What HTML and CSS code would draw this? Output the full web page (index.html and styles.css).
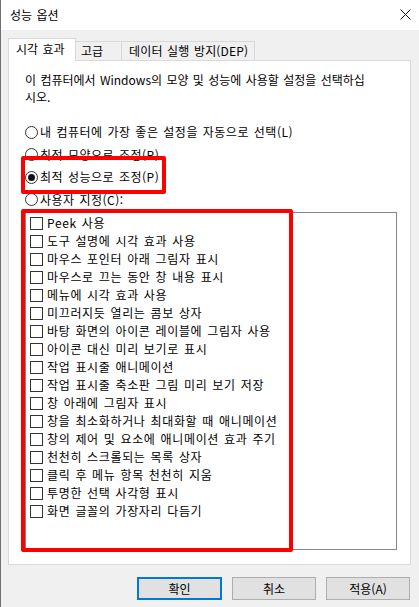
FILE: index.html
```html
<!DOCTYPE html>
<html lang="ko">
<head>
<meta charset="utf-8">
<title>성능 옵션</title>
<link rel="stylesheet" href="styles.css">
</head>
<body>
<div class="window">
  <div class="titlebar">
    <span class="title">성능 옵션</span>
    <svg class="close" width="11" height="11" viewBox="0 0 11 11"><path d="M0.5 0.5 L10.5 10.5 M10.5 0.5 L0.5 10.5" stroke="#111" stroke-width="1" fill="none"/></svg>
  </div>
  <div class="content">
    <div class="tabs">
      <div class="tab active">시각 효과</div>
      <div class="tab tab-adv">고급</div>
      <div class="tab tab-dep">데이터 실행 방지(DEP)</div>
    </div>
    <div class="panel">
      <p class="desc">이 컴퓨터에서 Windows의 모양 및 성능에 사용할 설정을 선택하십<br>시오.</p>
      <div class="radios">
        <div class="radio-row"><span class="radio"></span><span>내 컴퓨터에 가장 좋은 설정을 자동으로 선택(L)</span></div>
        <div class="radio-row"><span class="radio"></span><span>최적 모양으로 조정(P)</span></div>
        <div class="radio-row"><span class="radio checked"></span><span>최적 성능으로 조정(P)</span></div>
        <div class="radio-row"><span class="radio"></span><span>사용자 지정(C):</span></div>
      </div>
      <div class="listbox">
        <div class="item"><span class="check"></span><span>Peek 사용</span></div>
        <div class="item"><span class="check"></span><span>도구 설명에 시각 효과 사용</span></div>
        <div class="item"><span class="check"></span><span>마우스 포인터 아래 그림자 표시</span></div>
        <div class="item"><span class="check"></span><span>마우스로 끄는 동안 창 내용 표시</span></div>
        <div class="item"><span class="check"></span><span>메뉴에 시각 효과 사용</span></div>
        <div class="item"><span class="check"></span><span>미끄러지듯 열리는 콤보 상자</span></div>
        <div class="item"><span class="check"></span><span>바탕 화면의 아이콘 레이블에 그림자 사용</span></div>
        <div class="item"><span class="check"></span><span>아이콘 대신 미리 보기로 표시</span></div>
        <div class="item"><span class="check"></span><span>작업 표시줄 애니메이션</span></div>
        <div class="item"><span class="check"></span><span>작업 표시줄 축소판 그림 미리 보기 저장</span></div>
        <div class="item"><span class="check"></span><span>창 아래에 그림자 표시</span></div>
        <div class="item"><span class="check"></span><span>창을 최소화하거나 최대화할 때 애니메이션</span></div>
        <div class="item"><span class="check"></span><span>창의 제어 및 요소에 애니메이션 효과 주기</span></div>
        <div class="item"><span class="check"></span><span>천천히 스크롤되는 목록 상자</span></div>
        <div class="item"><span class="check"></span><span>클릭 후 메뉴 항목 천천히 지움</span></div>
        <div class="item"><span class="check"></span><span>투명한 선택 사각형 표시</span></div>
        <div class="item"><span class="check"></span><span>화면 글꼴의 가장자리 다듬기</span></div>
      </div>
    </div>
    <div class="buttons">
      <button class="btn default">확인</button>
      <button class="btn">취소</button>
      <button class="btn">적용(A)</button>
    </div>
  </div>
  <div class="mark mark-radio"></div>
  <div class="mark mark-list"></div>
</div>
</body>
</html>
```

FILE: styles.css
```css
* { box-sizing: border-box; }
html, body {
  margin: 0;
  padding: 0;
  width: 419px;
  height: 607px;
  overflow: hidden;
  background: #f0f0f0;
}
body {
  font-family: "Noto Sans CJK KR", "Noto Sans", sans-serif;
  font-size: 12px;
  color: #000;
  word-spacing: 1px;
}
.window {
  position: relative;
  width: 419px;
  height: 607px;
  border-left: 1px solid #707070;
  background: #f0f0f0;
}
.titlebar {
  height: 30px;
  background: #fff;
  display: flex;
  align-items: center;
  justify-content: space-between;
  padding-left: 9px;
  padding-right: 8px;
}
.title {
  font-size: 12px;
  line-height: 16px;
  margin-top: -1px;
}
.close {
  display: block;
  margin-top: -1px;
}
.content {
  padding: 0 8px 0 7px;
}
.tabs {
  display: flex;
  align-items: flex-end;
  height: 22px;
  margin-top: 8px;
  position: relative;
  z-index: 2;
}
.tab {
  height: 19px;
  line-height: 17px;
  border: 1px solid #d9d9d9;
  border-bottom: none;
  background: #f0f0f0;
  padding: 0 4px;
  white-space: nowrap;
}
.tab.active {
  height: 23px;
  line-height: 20px;
  margin-bottom: -1px;
  background: #fff;
  padding-left: 7px;
  width: 68px;
  position: relative;
  z-index: 2;
}
.tab-adv {
  width: 47px;
  margin-left: -1px;
  padding-left: 5px;
}
.tab-dep {
  width: 134px;
  margin-left: -1px;
  padding-left: 7px;
  letter-spacing: 0.15px;
}
.panel {
  background: #fff;
  border: 1px solid #d9d9d9;
  height: 505px;
  padding: 10px 0 0 16px;
  position: relative;
  z-index: 1;
}
.desc {
  margin: 0;
  line-height: 17px;
}
.radios {
  margin-top: 16px;
  letter-spacing: 0.5px;
}
.radio-row {
  height: 22.5px;
  display: flex;
  align-items: center;
  gap: 2px;
  line-height: 16px;
}
.radio {
  width: 13px;
  height: 13px;
  border: 1px solid #333;
  border-radius: 50%;
  background: #fff;
  display: flex;
  align-items: center;
  justify-content: center;
  flex: none;
}
.radio.checked::after {
  content: "";
  width: 7px;
  height: 7px;
  border-radius: 50%;
  background: #111;
}
.listbox {
  margin-top: 1px;
  width: 372px;
  height: 338px;
  border: 1px solid #828790;
  background: #fff;
  padding: 1px 0 0 4px;
  letter-spacing: 0.65px;
}
.item {
  height: 18px;
  display: flex;
  align-items: center;
  gap: 4px;
  line-height: 16px;
  white-space: nowrap;
}
.check {
  width: 13px;
  height: 13px;
  border: 1px solid #333;
  background: #fff;
  flex: none;
}
.buttons {
  display: flex;
  justify-content: flex-end;
  gap: 10px;
  margin-top: 12px;
  margin-right: 1px;
}
.btn {
  width: 84px;
  height: 23px;
  padding: 0;
  background: #e1e1e1;
  border: 1px solid #adadad;
  font-family: inherit;
  font-size: 12px;
  color: #000;
  line-height: 16px;
}
.btn.default {
  border: 2px solid #0078d7;
  width: 85px;
}
.mark {
  position: absolute;
  border: 4px solid #ff0000;
  border-radius: 2px;
  z-index: 5;
}
.mark-radio {
  left: 20px;
  top: 156px;
  width: 145px;
  height: 38px;
}
.mark-list {
  left: 20px;
  top: 209px;
  width: 272px;
  height: 343px;
}
```
